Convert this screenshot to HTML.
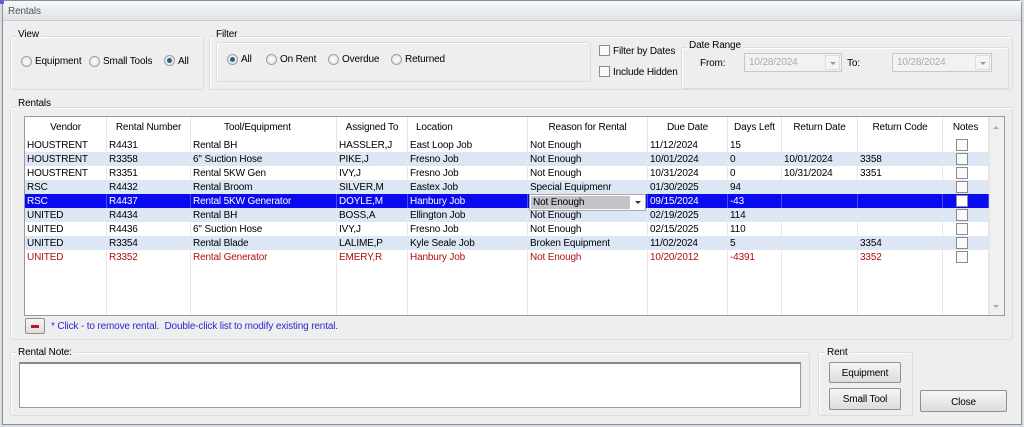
<!DOCTYPE html>
<html><head><meta charset="utf-8"><style>
*{box-sizing:border-box;margin:0;padding:0}
body{width:1024px;height:427px;overflow:hidden;background:#d9dde3;font-family:"Liberation Sans",Arial,sans-serif;font-size:10px;color:#000;position:relative;letter-spacing:-0.15px}
.a{position:absolute}
.win{position:absolute;left:2px;top:0;width:1020px;height:425px;background:#eeeeee;border:1px solid #8a8f96;border-radius:4px 4px 0 0}
.title{position:absolute;left:0;top:0;width:100%;height:20px;background:linear-gradient(#f7f8fa,#dfe3e8);border-bottom:1px solid #c8ccd2;color:#555;font-size:10px;padding:5px 0 0 5px}
.grp{position:absolute;border:1px solid #dcdcdc;border-radius:3px;box-shadow:inset 1px 1px 0 #fff}
.lg{position:absolute;background:#eeeeee;padding:0 2px;font-size:10px}
.rad{position:absolute;width:11px;height:11px;border-radius:50%;border:1px solid #9aa0a6;background:radial-gradient(#fff,#dcdcdc)}
.rad.on::after{content:"";position:absolute;left:2px;top:2px;width:5px;height:5px;border-radius:50%;background:#2c5f7a}
.cb{position:absolute;width:11px;height:11px;border:1px solid #8b8b8b;background:#fafafa}
.combo{position:absolute;height:19px;border:1px solid #c8c8c8;background:#f2f2f2;color:#aaa;padding:3px 0 0 4px}
.combo i{position:absolute;right:1px;top:1px;width:15px;height:15px;border:1px solid #ddd;background:#f4f4f4}
.combo i::after{content:"";position:absolute;left:4px;top:6px;border:3px solid transparent;border-top:3px solid #999}
.grid{position:absolute;left:24px;top:116px;width:981px;height:200px;background:#fff;border:1px solid #9a9a9a;overflow:hidden}
.hd{position:absolute;top:0;height:21px;border-right:1px solid #e3e3e3;padding:5px 0 0 0;text-align:center;font-size:10px;background:#fff}
.row{position:absolute;left:0;width:963px;height:14px}
.c{position:absolute;top:0;height:14px;padding:2px 0 0 2px;border-right:1px solid #e8e8e8;white-space:nowrap;font-size:10px}
.btn{position:absolute;border:1px solid #8e8f8f;border-radius:2px;background:linear-gradient(#f6f6f6,#dcdcdc);text-align:center;font-size:10px}
</style></head><body>
<div class="win">
<div class="title">Rentals</div>
</div>
<div class="a" style="left:0;top:0;width:4px;height:4px;background:#6a5acd"></div>

<div class="grp" style="left:10px;top:36px;width:194px;height:54px"></div>
<div class="lg" style="left:16px;top:29px">View</div>
<div class="rad" style="left:21px;top:56px"></div><div class="a" style="left:35px;top:56px">Equipment</div>
<div class="rad" style="left:89px;top:56px"></div><div class="a" style="left:103px;top:56px">Small Tools</div>
<div class="rad on" style="left:164px;top:55px"></div><div class="a" style="left:178px;top:56px">All</div>

<div class="grp" style="left:209px;top:36px;width:804px;height:54px"></div>
<div class="lg" style="left:214px;top:29px">Filter</div>
<div class="grp" style="left:216px;top:42px;width:375px;height:40px"></div>
<div class="rad on" style="left:227px;top:54px"></div><div class="a" style="left:241px;top:54px">All</div>
<div class="rad" style="left:266px;top:54px"></div><div class="a" style="left:280px;top:54px">On Rent</div>
<div class="rad" style="left:328px;top:54px"></div><div class="a" style="left:342px;top:54px">Overdue</div>
<div class="rad" style="left:391px;top:54px"></div><div class="a" style="left:405px;top:54px">Returned</div>
<div class="cb" style="left:599px;top:45px"></div><div class="a" style="left:613px;top:46px">Filter by Dates</div>
<div class="cb" style="left:599px;top:66px"></div><div class="a" style="left:613px;top:67px">Include Hidden</div>
<div class="grp" style="left:681px;top:47px;width:328px;height:42px"></div>
<div class="lg" style="left:687px;top:40px">Date Range</div>
<div class="a" style="left:700px;top:58px">From:</div>
<div class="combo" style="left:744px;top:53px;width:98px">10/28/2024<i></i></div>
<div class="a" style="left:847px;top:58px">To:</div>
<div class="combo" style="left:892px;top:53px;width:100px">10/28/2024<i></i></div>

<div class="grp" style="left:10px;top:107px;width:1003px;height:233px"></div>
<div class="lg" style="left:16px;top:98px">Rentals</div>
<div class="grid">
<div class="hd" style="left:0;width:82px">Vendor</div>
<div class="hd" style="left:82px;width:84px">Rental Number</div>
<div class="hd" style="left:166px;width:146px;text-align:left;padding-left:33px">Tool/Equipment</div>
<div class="hd" style="left:312px;width:71px">Assigned To</div>
<div class="hd" style="left:383px;width:120px;text-align:left;padding-left:8px">Location</div>
<div class="hd" style="left:503px;width:120px">Reason for Rental</div>
<div class="hd" style="left:623px;width:80px">Due Date</div>
<div class="hd" style="left:703px;width:54px">Days Left</div>
<div class="hd" style="left:757px;width:76px">Return Date</div>
<div class="hd" style="left:833px;width:85px">Return Code</div>
<div class="hd" style="left:918px;width:46px">Notes</div>
<div class="a" style="left:964px;top:0;width:16px;height:198px;background:#f0f0f0;border-left:1px solid #e5e5e5"></div>
<div class="a" style="left:968px;top:6px;border:3px solid transparent;border-bottom:3px solid #aaa"></div>
<div class="a" style="left:968px;top:188px;border:3px solid transparent;border-top:3px solid #aaa"></div>
<div id="rows"></div>
</div>
<script>
var d=[["HOUSTRENT","R4431","Rental BH","HASSLER,J","East Loop Job","Not Enough","11/12/2024","15","",""],
["HOUSTRENT","R3358","6\" Suction Hose","PIKE,J","Fresno Job","Not Enough","10/01/2024","0","10/01/2024","3358"],
["HOUSTRENT","R3351","Rental 5KW Gen","IVY,J","Fresno Job","Not Enough","10/31/2024","0","10/31/2024","3351"],
["RSC","R4432","Rental Broom","SILVER,M","Eastex Job","Special Equipmenr","01/30/2025","94","",""],
["RSC","R4437","Rental 5KW Generator","DOYLE,M","Hanbury Job","","09/15/2024","-43","",""],
["UNITED","R4434","Rental BH","BOSS,A","Ellington Job","Not Enough","02/19/2025","114","",""],
["UNITED","R4436","6\" Suction Hose","IVY,J","Fresno Job","Not Enough","02/15/2025","110","",""],
["UNITED","R3354","Rental Blade","LALIME,P","Kyle Seale Job","Broken Equipment","11/02/2024","5","","3354"],
["UNITED","R3352","Rental Generator","EMERY,R","Hanbury Job","Not Enough","10/20/2012","-4391","","3352"]];
var L=[0,82,166,312,383,503,623,703,757,833,918],W=[82,84,146,71,120,120,80,54,76,85,46];
var h="";
for(var i=0;i<13;i++){var r=d[i]||["","","","","","","","","",""];
var bg=i==4?"#0a0af0":(i%2==1&&i<9?"#dce6f5":"#fff");var col=i==4?"#fff":(i==8?"#b01010":"#000");
h+='<div class="row" style="top:'+(21+i*14)+'px;background:'+bg+';color:'+col+'">';
for(var j=0;j<11;j++){var t=j<10?r[j]:"";h+='<div class="c" style="left:'+L[j]+'px;width:'+W[j]+'px;'+(i==4?'border-right-color:#4a4af5':'')+'">'+t.replace(/"/g,"&quot;")+'</div>';}
if(i<9)h+='<div class="cb" style="left:931px;top:1px;width:12px;height:12px;'+(i==4?'background:#fff':'')+'"></div>';
h+='</div>';}
h+='<div class="a" style="left:504px;top:77px;width:117px;height:17px;background:#fff;border:1px solid #aaa"><div class="a" style="left:1px;top:1px;width:99px;height:13px;background:#c4c4c8;color:#000;padding:1px 0 0 2px">Not Enough</div><div class="a" style="left:105px;top:6px;border:3px solid transparent;border-top:3px solid #333"></div></div>';
document.getElementById("rows").innerHTML=h;
</script>
<div class="btn" style="left:25px;top:318px;width:20px;height:16px"><div class="a" style="left:5px;top:6px;width:8px;height:3px;background:#c8102e"></div></div>
<div class="a" style="left:51px;top:321px;color:#2a2ad0">* Click - to remove rental.&nbsp; Double-click list to modify existing rental.</div>

<div class="grp" style="left:10px;top:352px;width:800px;height:64px"></div>
<div class="lg" style="left:16px;top:347px">Rental Note:</div>
<div class="a" style="left:19px;top:362px;width:782px;height:46px;background:#fff;border:1px solid #9a9a9a;border-top:2px solid #888"></div>
<div class="grp" style="left:818px;top:352px;width:95px;height:64px"></div>
<div class="lg" style="left:825px;top:347px">Rent</div>
<div class="btn" style="left:829px;top:362px;width:72px;height:21px;padding-top:5px">Equipment</div>
<div class="btn" style="left:829px;top:388px;width:72px;height:22px;padding-top:5px">Small Tool</div>
<div class="btn" style="left:920px;top:390px;width:87px;height:22px;padding-top:6px">Close</div>
</body></html>
